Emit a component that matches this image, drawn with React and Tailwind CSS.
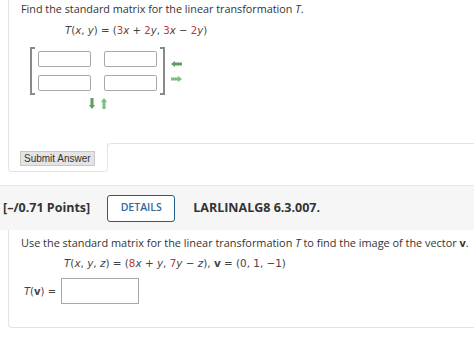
import React from 'react'

const body = { fontFamily: '"Open Sans", "DejaVu Sans", sans-serif' }
const math = { fontFamily: '"DejaVu Sans", Verdana, sans-serif' }

function Red({ children }) {
  return <span className="text-[#c0392b]">{children}</span>
}

function Bracket({ side }) {
  return (
    <div
      className={`w-[5px] h-[48px] border-y-2 border-[#8a8a8a] ${
        side === 'left' ? 'border-l-2' : 'border-r-2'
      }`}
    />
  )
}

function Cell() {
  return <div className="w-[53px] h-[16px] rounded-[2px] border border-[#a9a9a9] bg-white" />
}

function ArrowH({ dir, color }) {
  return (
    <svg width="11" height="6" viewBox="0 0 11 6">
      {dir === 'left' ? (
        <path d="M0 3 L4 0 L4 1.5 L11 1.5 L11 4.5 L4 4.5 L4 6 Z" fill={color} />
      ) : (
        <path d="M11 3 L7 0 L7 1.5 L0 1.5 L0 4.5 L7 4.5 L7 6 Z" fill={color} />
      )}
    </svg>
  )
}

function ArrowV({ dir, color }) {
  return (
    <svg width="6" height="11" viewBox="0 0 6 11">
      {dir === 'down' ? (
        <path d="M3 11 L0 7 L1.5 7 L1.5 0 L4.5 0 L4.5 7 L6 7 Z" fill={color} />
      ) : (
        <path d="M3 0 L0 4 L1.5 4 L1.5 11 L4.5 11 L4.5 4 L6 4 Z" fill={color} />
      )}
    </svg>
  )
}

export default function App() {
  return (
    <div className="w-[474px] h-[338px] bg-white overflow-hidden text-[#333]" style={body}>
      {/* first question */}
      <div className="ml-2">
        <div className="h-[143px] border-l border-[#e3e3e3] pl-3 pt-[2px]">
          <p className="text-[10.8px] leading-[14px] whitespace-nowrap">
            Find the standard matrix for the linear transformation <i>T</i>.
          </p>
          <p className="mt-[9px] ml-[44px] text-[10.2px] leading-[12px] text-[#444] whitespace-nowrap" style={math}>
            <i>T</i>(<i>x</i>, <i>y</i>) = (<Red>3</Red><i>x</i> + <Red>2</Red><i>y</i>, <Red>3</Red><i>x</i> − <Red>2</Red><i>y</i>)
          </p>
          <div className="mt-[10px] ml-[9px] flex items-center">
            <Bracket side="left" />
            <div className="mx-[3px] grid grid-cols-2 gap-x-[13px] gap-y-[8px]">
              <Cell />
              <Cell />
              <Cell />
              <Cell />
            </div>
            <Bracket side="right" />
            <div className="ml-[6px] flex flex-col gap-[9px]">
              <ArrowH dir="left" color="#5f9d5f" />
              <ArrowH dir="right" color="#7cbf7c" />
            </div>
          </div>
          <div className="mt-[3px] ml-[68px] flex gap-[6px]">
            <ArrowV dir="down" color="#5f9d5f" />
            <ArrowV dir="up" color="#7cbf7c" />
          </div>
        </div>
        <div className="flex">
          <div className="w-[100px] h-[29px] border-l border-b border-r border-[#e3e3e3] rounded-b-[4px] pl-[11px] pt-[8px]">
            <button
              className="block h-[15px] px-[3px] bg-[#e4e4e4] border border-[#c8c8c8] text-[10px] leading-[13px] text-[#333]"
              style={{ fontFamily: '"Liberation Sans", Arial, sans-serif' }}
            >
              Submit Answer
            </button>
          </div>
          <div className="flex-1 border-t border-[#e3e3e3] rounded-tl-[4px]" />
        </div>
      </div>

      {/* second question header */}
      <div className="mt-[13px] h-[45px] bg-[#f6f6f6] border-t border-[#e8e8e8] flex items-center pl-[3px]">
        <span className="text-[12.5px] font-bold text-[#333] whitespace-nowrap">[–/0.71 Points]</span>
        <button className="ml-[17px] w-[68px] h-[27px] rounded-[3px] border-[1.5px] border-[#1f5d8c] bg-white text-[10.5px] font-semibold text-[#2c6aa0]">
          DETAILS
        </button>
        <span className="ml-[18px] text-[12.5px] font-bold text-[#333] whitespace-nowrap">LARLINALG8 6.3.007.</span>
      </div>

      {/* second question body */}
      <div className="ml-2 h-[98px] border-l border-b border-[#e3e3e3] rounded-bl-[4px] pl-3 pt-[6px]">
        <p className="text-[10.9px] leading-[14px] whitespace-nowrap">
          Use the standard matrix for the linear transformation <i>T</i> to find the image of the vector <b>v</b>.
        </p>
        <p className="mt-[7px] ml-[43px] text-[10.4px] leading-[12px] text-[#444] whitespace-nowrap" style={math}>
          <i>T</i>(<i>x</i>, <i>y</i>, <i>z</i>) = (<Red>8</Red><i>x</i> + <i>y</i>, <Red>7</Red><i>y</i> − <i>z</i>), <b>v</b> = (0, 1, −1)
        </p>
        <div className="mt-[9px] ml-[3px] flex items-center">
          <span className="text-[10px] text-[#444] whitespace-nowrap" style={math}>
            <i>T</i>(<b>v</b>) =
          </span>
          <div className="ml-[5px] w-[78px] h-[26px] border border-[#a9a9a9] bg-white" />
        </div>
      </div>
    </div>
  )
}
